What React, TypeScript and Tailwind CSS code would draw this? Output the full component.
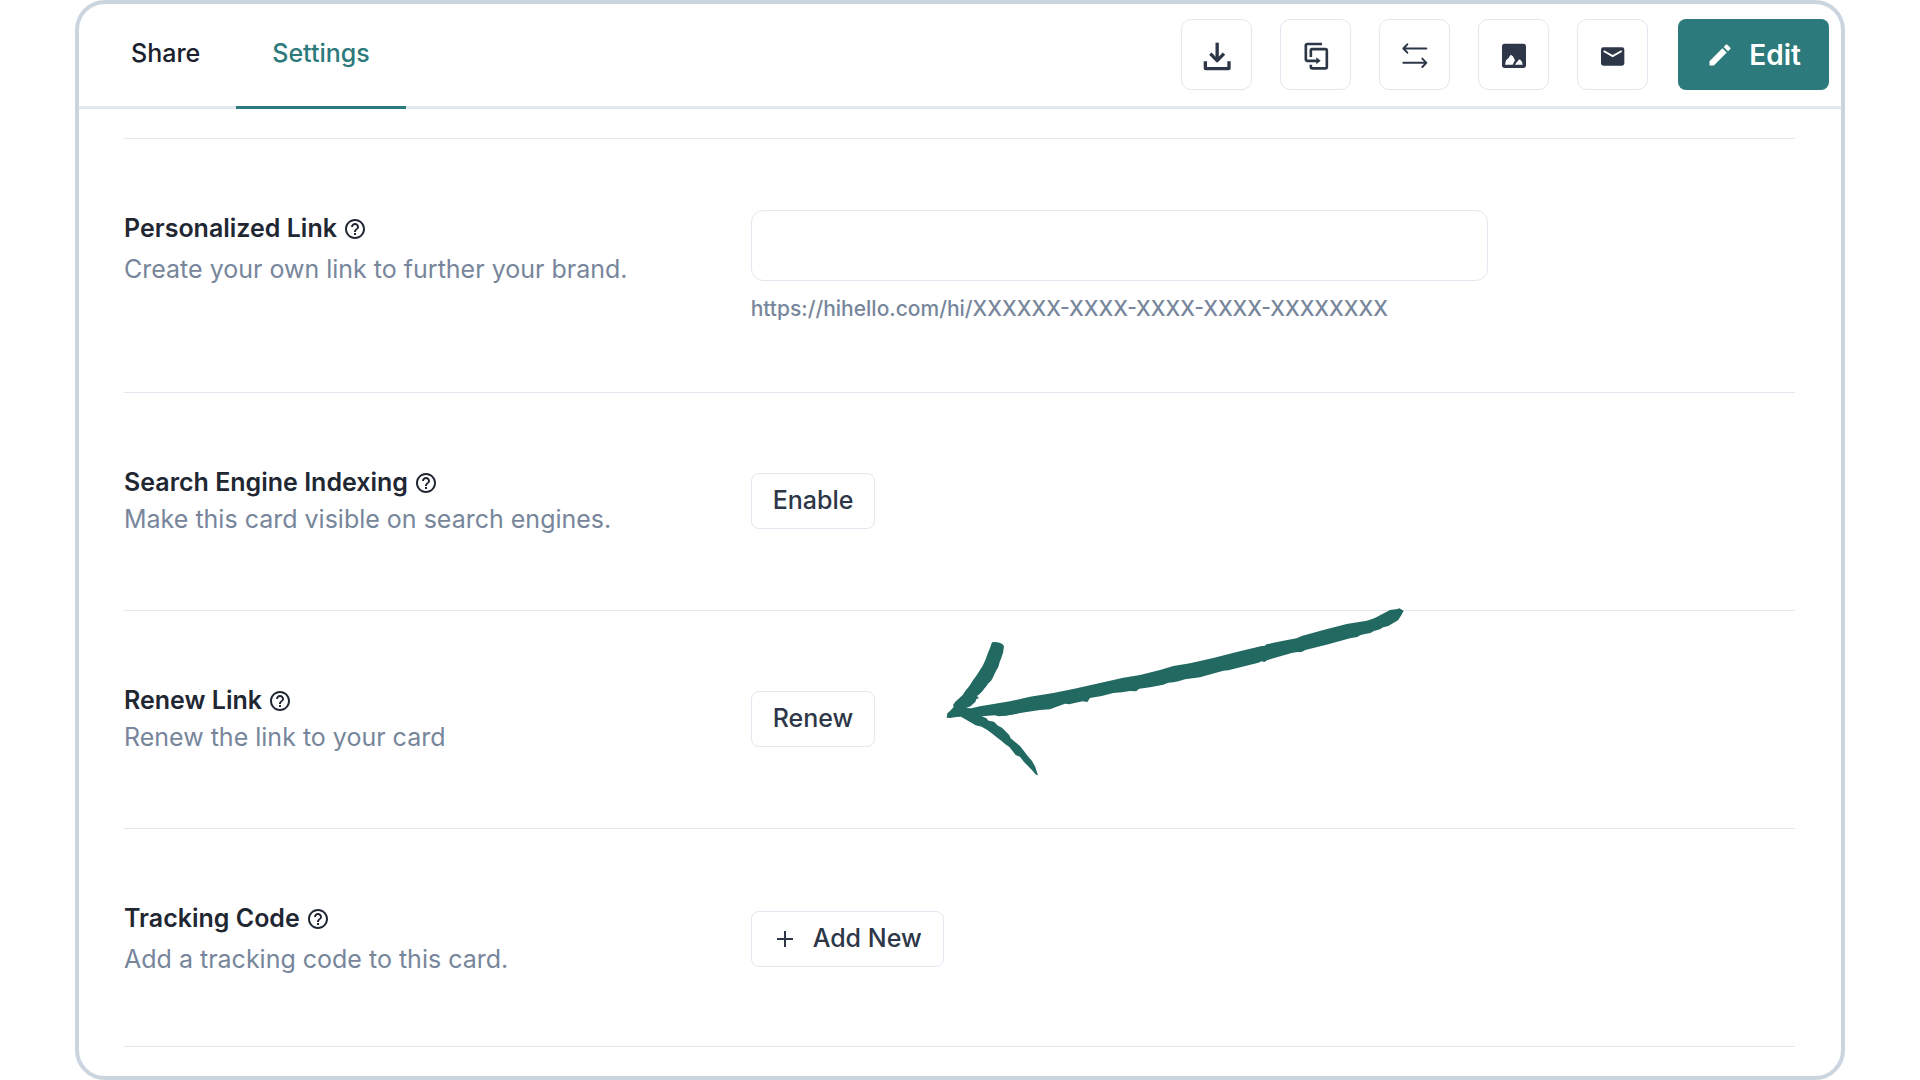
import React, { useState } from 'react';
import { MdEdit, MdHelpOutline } from 'react-icons/md';

const tabs = ['Share', 'Settings'];

const DownloadIcon = () => (
  <svg viewBox="0 0 108 108" className="w-9 h-9" fill="none" stroke="currentColor" strokeWidth="10" strokeLinejoin="round" aria-hidden="true">
    <path d="M54.500 17V70" />
    <path d="M34 50L54.500 71L75 50" />
    <path d="M19 73V94Q19 95 20 95H89Q90 95 90 94V73" />
  </svg>
);

const DuplicateIcon = () => (
  <svg viewBox="0 0 108 108" className="w-9 h-9" fill="none" stroke="currentColor" strokeWidth="8" strokeLinejoin="round" aria-hidden="true">
    <path d="M72 21H28Q23.500 21 23.500 25V67Q23.500 71.500 28 71.500H58" />
    <path d="M38.500 60V40Q38.500 36.500 42 36.500H82Q86.500 36.500 86.500 40V90Q86.500 94 82 94H42Q38.500 94 38.500 91V83" />
    <path d="M55 61L68 71.500L55 82Z" fill="currentColor" stroke="none" />
  </svg>
);

const SwapIcon = () => (
  <svg viewBox="0 0 108 108" className="w-9 h-9" fill="none" stroke="currentColor" strokeWidth="6" strokeLinecap="round" strokeLinejoin="round" aria-hidden="true">
    <path d="M88 34.500H19M31 22L19 34.500L31 47" />
    <path d="M19 77.500H88M76 65L88 77.500L76 90" />
  </svg>
);

const ImageIcon = () => (
  <svg viewBox="0 0 108 108" className="w-9 h-9" aria-hidden="true">
    <rect x="18" y="20" width="72" height="73" rx="8" fill="currentColor" />
    <path d="M27 83L30 70Q37 66 44 53Q52 56 55 66L57 69L50 83Z" fill="white" />
    <path d="M57 83Q62 74 66 72Q68 67 73 68Q80 74 80 83Z" fill="white" />
  </svg>
);

const MailIcon = () => (
  <svg viewBox="0 0 108 108" className="w-9 h-9" aria-hidden="true">
    <rect x="18" y="31" width="70" height="55" rx="7" fill="currentColor" />
    <path d="M26 42L53 57L80 42" fill="none" stroke="white" strokeWidth="6" />
  </svg>
);

const PlusIcon = () => (
  <svg viewBox="0 0 24 24" className="w-6 h-6" fill="none" stroke="currentColor" strokeWidth="2" aria-hidden="true">
    <path d="M12 4V20M4 12H20" />
  </svg>
);

// Hand drawn pointer towards the Renew button
const BrushArrow = () => (
  <svg
    viewBox="0 0 1440 540"
    className="absolute left-[179px] -top-[91px] w-[480px] h-[180px] text-[#226a61] pointer-events-none"
    fill="currentColor"
    aria-hidden="true"
  >
    <path d="M186 127Q202 123 217 132L222 139L219 158L213 176L209 186L205 201L198 213L192 225L187 236L182 244L175 250L169 259L162 267L157 274L149 282L141 288L147 295L139 297L136 306L128 313L122 319L108 324L124 325L150 319L240 304L300 290L370 279L440 265L500 251L580 233L630 225L690 210L730 198L780 190L850 174L920 156L995 138L1003 138L1010 133L1060 122L1100 115L1115 108L1180 90L1250 72L1310 62Q1335 56 1350 46L1380 30L1402 27L1408 25L1421 32L1414 46L1404 61L1390 69L1375 78L1360 82L1350 88L1332 93L1321 99L1305 102L1290 106L1282 111L1260 115L1195 133L1126 150L1115 156L1102 156L1085 159L1013 180L1003 186L995 184L985 188L895 211L880 212L810 232L765 238L745 244L730 247L715 248L700 254L660 262L628 266L618 274L600 273L575 277L550 279L515 288L480 294L472 306L458 304L430 310L418 313L405 311L380 320L360 328L330 330L285 337L255 342L228 347L205 349L195 346L155 349L168 354L176 362L192 365L204 377L216 383L228 395L238 406L242 415L258 428L270 438L280 451L293 468L306 483L315 499L324 526L318 524L305 509L291 495L282 486L270 470L257 465L247 452L238 441L226 433L214 422L200 412L187 401L172 390L155 380L143 377L137 376L115 363L93 350L78 351L61 354L50 353L52 340L60 333L71 321L69 315L76 305L86 296L98 285L106 273L118 258L129 241L140 226L150 210L159 196L167 178L174 158L180 144Z" />
    <path d="M220 346L247 338L266 340L239 345Z" />
  </svg>
);

const actions = [
  { label: 'Download', icon: <DownloadIcon /> },
  { label: 'Duplicate', icon: <DuplicateIcon /> },
  { label: 'Transfer', icon: <SwapIcon /> },
  { label: 'Image', icon: <ImageIcon /> },
  { label: 'Email', icon: <MailIcon /> }
];

interface SettingRowProps {
  title: string;
  description: string;
  spaced?: boolean;
  htmlFor?: string;
  children: React.ReactNode;
}

function SettingRow({ title, description, spaced, htmlFor, children }: SettingRowProps) {
  return (
    <div className="grid grid-cols-[3fr_5fr] content-start items-start min-h-[218px] pt-[71px] pb-[65px] border-b border-[#e2e8f0]">
      <div className={`flex flex-col ${spaced ? 'gap-1' : ''}`}>
        <div className="flex items-center gap-1.5 text-[#1f2733]">
          {htmlFor ? (
            <label htmlFor={htmlFor} className="text-[25px] leading-[37px] font-semibold">{title}</label>
          ) : (
            <h2 className="text-[25px] leading-[37px] font-semibold">{title}</h2>
          )}
          <MdHelpOutline className="w-6 h-6" />
        </div>
        <p className="text-[25px] leading-[37px] text-[#77869b]">{description}</p>
      </div>
      <div className="relative self-center">{children}</div>
    </div>
  );
}

function OutlineButton({ children }: { children: React.ReactNode }) {
  return (
    <button className="h-14 px-[21px] flex items-center gap-4 rounded-lg border border-[#e2e8f0] text-[25px] font-medium text-[#2d3748]">
      {children}
    </button>
  );
}

export default function App() {
  const [activeTab, setActiveTab] = useState('Settings');
  const [link, setLink] = useState('');

  return (
    <div className="min-h-screen flex bg-white px-[75px] font-['Inter',sans-serif]">
      <main className="flex-1 border-4 border-[#cbd5e0] rounded-[30px]">
        <header className="flex justify-between h-[105px] border-b-[3px] border-[#e2e8f0] pl-4 pr-3">
          <nav className="flex">
            {tabs.map((tab) => (
              <button
                key={tab}
                onClick={() => setActiveTab(tab)}
                className={`h-[105px] px-9 pb-0.5 text-[25px] font-medium border-b-[3px] ${
                  activeTab === tab
                    ? 'border-[#2c7a7b] text-[#2c7a7b]'
                    : 'border-transparent text-[#1a202c]'
                }`}
              >
                {tab}
              </button>
            ))}
          </nav>
          <div className="flex gap-[30px] pt-[15px]">
            <div className="flex gap-7">
              {actions.map((action) => (
                <button
                  key={action.label}
                  aria-label={action.label}
                  className="w-[71px] h-[71px] flex items-center justify-center rounded-[10px] border border-[#e2e8f0] text-[#2d3748]"
                >
                  {action.icon}
                </button>
              ))}
            </div>
            <button className="h-[71px] px-7 flex items-center gap-[15px] rounded-lg bg-[#2c7a7b] text-white text-[28px] font-semibold">
              <MdEdit className="w-7 h-7" />
              Edit
            </button>
          </div>
        </header>

        <div className="pl-[45px] pr-[46px] pt-[29px] pb-7">
          <div className="border-t border-[#e2e8f0]">
            <SettingRow
              title="Personalized Link"
              description="Create your own link to further your brand."
              htmlFor="personalized-link"
              spaced
            >
              <input
                id="personalized-link"
                type="text"
                value={link}
                onChange={(e) => setLink(e.target.value)}
                className="block w-[737px] max-w-full h-[71px] px-5 rounded-xl border border-[#e2e8f0] text-[25px] text-[#2d3748]"
              />
              <p className="mt-[10px] text-[21px] leading-9 font-medium text-[#77869b]">
                https://hihello.com/hi/XXXXXX-XXXX-XXXX-XXXX-XXXXXXXX
              </p>
            </SettingRow>

            <SettingRow title="Search Engine Indexing" description="Make this card visible on search engines.">
              <OutlineButton>Enable</OutlineButton>
            </SettingRow>

            <SettingRow title="Renew Link" description="Renew the link to your card">
              <OutlineButton>Renew</OutlineButton>
              <BrushArrow />
            </SettingRow>

            <SettingRow title="Tracking Code" description="Add a tracking code to this card." spaced>
              <OutlineButton>
                <PlusIcon />
                Add New
              </OutlineButton>
            </SettingRow>
          </div>
        </div>
      </main>
    </div>
  );
}
